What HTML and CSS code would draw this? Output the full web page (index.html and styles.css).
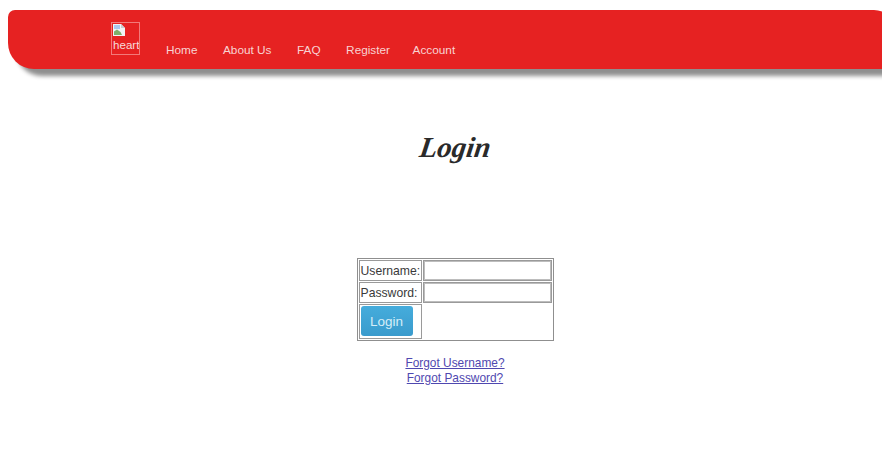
FILE: index.html
```html
<!DOCTYPE html>
<html lang="en">
<head>
<meta charset="utf-8">
<title>Login</title>
<link rel="stylesheet" href="styles.css">
</head>
<body>
<header class="bar">
  <div class="broken">
    <svg class="broken-icon" width="12" height="12" viewBox="0 0 12 12">
      <path d="M0 0H8L12 4V12H0Z" fill="#f1f3f5"/>
      <path d="M1 1H7V5H1Z" fill="#a9c8ee"/>
      <path d="M1 11V7.5L4 5.5L7.5 8L9 11Z" fill="#7fae6a"/>
      <path d="M8 0V4H12" fill="#c9cdd1"/>
    </svg>
    <span class="broken-alt">heart</span>
  </div>
  <nav class="nav">
    <a href="#">Home</a>
    <a href="#">About Us</a>
    <a href="#">FAQ</a>
    <a href="#">Register</a>
    <a class="nav-last" href="#">Account</a>
  </nav>
</header>
<main class="main">
  <h1 class="title">Login</h1>
  <table class="form">
    <tr><td>Username:</td><td class="input-cell"><input class="field" type="text"></td></tr>
    <tr><td>Password:</td><td class="input-cell"><input class="field" type="text"></td></tr>
    <tr><td class="btn-cell"><button class="btn" type="button">Login</button></td><td class="empty"></td></tr>
  </table>
  <div class="links">
    <a href="#">Forgot Username?</a>
    <a href="#">Forgot Password?</a>
  </div>
</main>
</body>
</html>
```
FILE: styles.css
```css
html, body { margin: 0; padding: 0; overflow: hidden; }
body {
  background: #fff;
  font-family: "Liberation Sans", Arial, sans-serif;
  color: #333;
  height: 451px;
  width: 882px;
}
.bar {
  margin: 10px -14px 0 8px;
  height: 59px;
  background: #e62222;
  border-radius: 7px 22px 0 26px;
  box-shadow: 8px 7px 4px #8f8f8f;
  display: flex;
  align-items: flex-start;
  padding-left: 103px;
  box-sizing: border-box;
}
.broken {
  margin-top: 12px;
  width: 29px;
  height: 33px;
  box-sizing: border-box;
  border: 1px solid #f27a7a;
  color: #f6dcdc;
  font-size: 11.6px;
  line-height: 14px;
  overflow: hidden;
  white-space: nowrap;
}
.broken-icon { display: block; margin: 1px 0 0 1px; }
.broken-alt { display: block; margin: 2px 0 0 1px; }
.nav {
  display: flex;
  gap: 25.5px;
  margin: 33px 0 0 26px;
  font-size: 11.8px;
  line-height: 14px;
}
.nav a { color: #f8d3d3; text-decoration: none; }
.nav .nav-last { margin-left: -3px; }
.main {
  padding-left: 28px;
  display: flex;
  flex-direction: column;
  align-items: center;
}
.title {
  margin: 58px 0 0;
  height: 131px;
  font-family: "Liberation Serif", serif;
  font-style: italic;
  font-weight: 700;
  font-size: 29px;
  line-height: 40px;
  color: #2a2a2a;
  transform: skewX(-8deg);
  transform-origin: 50% 20px;
}
.form {
  border: 1px solid #8f8f8f;
  border-spacing: 1px;
  border-collapse: separate;
  width: 197px;
  font-size: 12.2px;
}
.form td {
  border: 1px solid #9a9a9a;
  padding: 0 1px;
  height: 19px;
  white-space: nowrap;
  color: #3a3a3a;
}
.form td:first-child { width: 58px; }
.form td.empty { border: 0; }
.form .input-cell { padding: 0; }
.form .btn-cell { padding: 1px 1px 2px; }
.field {
  display: block;
  box-sizing: border-box;
  width: 100%;
  height: 19px;
  margin: 0;
  border: 1px solid #bdbdbd;
  background: #fff;
  padding: 0;
}
.btn {
  display: block;
  width: 52px;
  height: 30px;
  border: 0;
  border-radius: 3px;
  background: linear-gradient(#45acdc, #3a9bcd);
  color: #d5eef8;
  font: 13.5px "Liberation Sans", Arial, sans-serif;
  padding: 0;
}
.links {
  margin-top: 15px;
  display: flex;
  flex-direction: column;
  align-items: center;
  font-size: 11.9px;
  line-height: 15px;
}
.links a { color: #4f48b0; }
```
